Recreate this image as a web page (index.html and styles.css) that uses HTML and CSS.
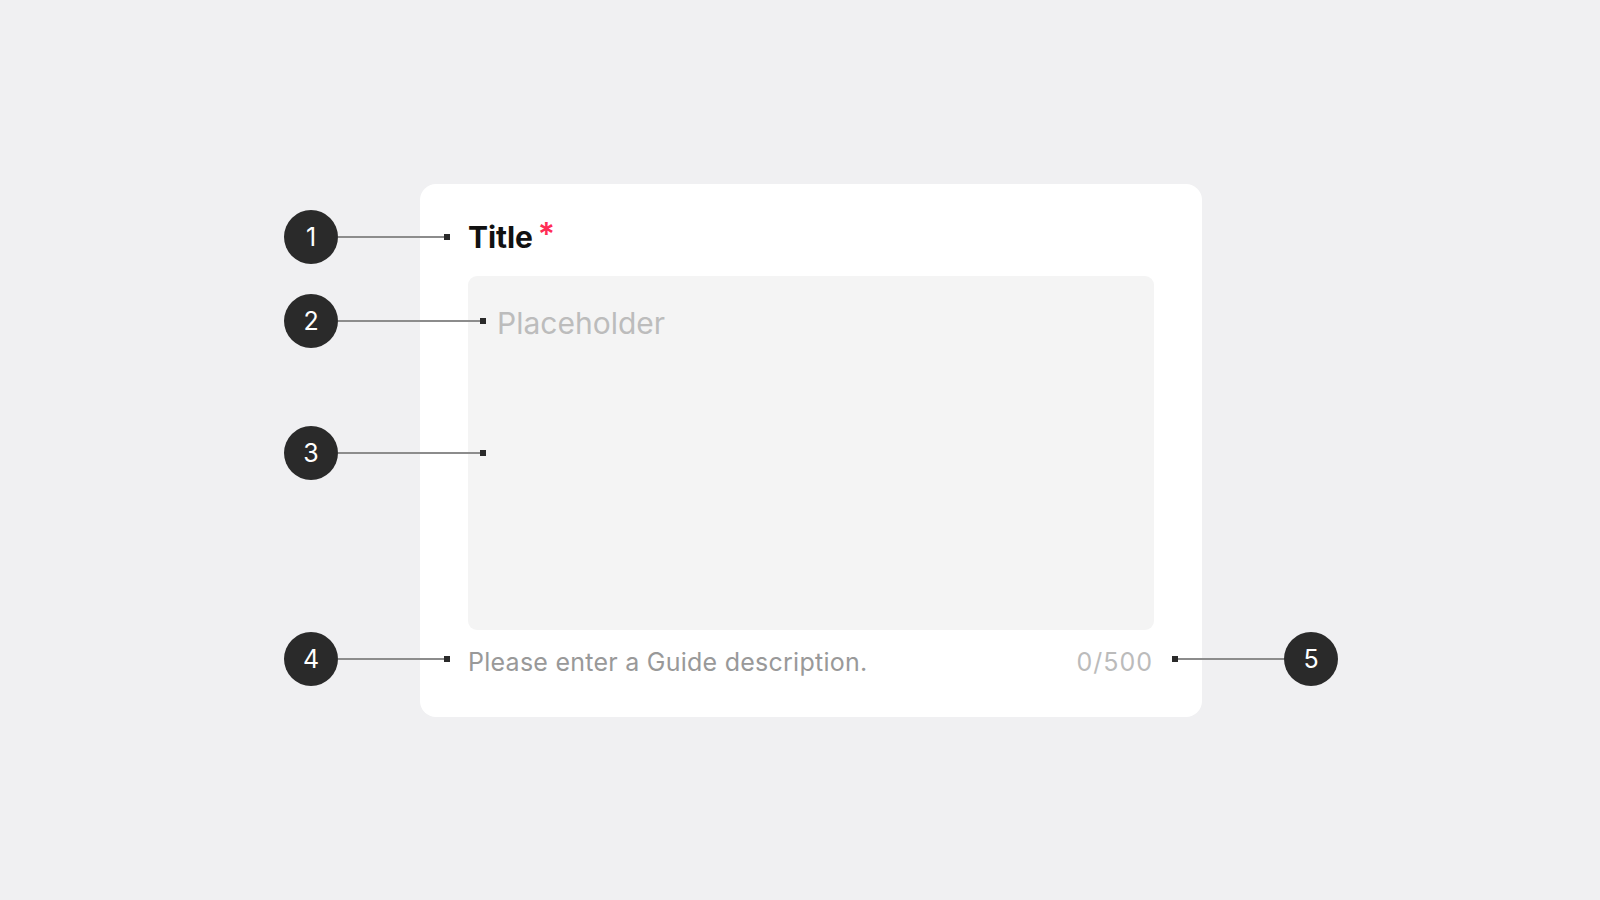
FILE: index.html
```html
<!DOCTYPE html>
<html lang="en">
<head>
<meta charset="utf-8">
<title>Textarea anatomy</title>
<link rel="stylesheet" href="styles.css">
</head>
<body>
<main class="stage">
  <section class="card">
    <div class="label-row">
      <span class="label">Title</span><span class="required">*</span>
    </div>
    <div class="field">
      <span class="placeholder">Placeholder</span>
    </div>
    <div class="footer">
      <span class="helper">Please enter a Guide description.</span>
      <span class="counter">0/500</span>
    </div>

    <div class="callout callout-1"><span class="dot">1</span><span class="line"></span><span class="tip"></span></div>
    <div class="callout callout-2"><span class="dot">2</span><span class="line"></span><span class="tip"></span></div>
    <div class="callout callout-3"><span class="dot">3</span><span class="line"></span><span class="tip"></span></div>
    <div class="callout callout-4"><span class="dot">4</span><span class="line"></span><span class="tip"></span></div>
    <div class="callout callout-5 reverse"><span class="dot">5</span><span class="line"></span><span class="tip"></span></div>
  </section>
</main>
</body>
</html>
```

FILE: styles.css
```css
* { box-sizing: border-box; }

html, body {
  margin: 0;
  padding: 0;
  background: #f0f0f2;
  font-family: Inter, "Noto Sans", "Liberation Sans", sans-serif;
}

.stage {
  width: 1600px;
  height: 900px;
  padding: 184px 0 0 420px;
}

.card {
  position: relative;
  width: 782px;
  height: 533px;
  background: #ffffff;
  border-radius: 16px;
  padding: 0 48px;
  display: flex;
  flex-direction: column;
}

.label-row {
  height: 92px;
  display: flex;
  align-items: flex-start;
  padding-top: 33px;
}

.label {
  font-size: 30px;
  font-weight: 700;
  line-height: 40px;
  color: #111111;
  letter-spacing: -0.1px;
}

.required {
  color: #ff2d55;
  font-size: 32px;
  font-weight: 600;
  line-height: 32px;
  margin-left: 5px;
  margin-top: 2px;
}

.field {
  height: 354px;
  background: #f4f4f4;
  border-radius: 9px;
  padding: 29px 29px;
}

.placeholder {
  display: block;
  font-size: 30px;
  line-height: 36px;
  color: #bcbcbc;
}

.footer {
  display: flex;
  justify-content: space-between;
  align-items: baseline;
  padding-top: 12px;
}

.helper {
  font-size: 25px;
  line-height: 40px;
  color: #999999;
  letter-spacing: 0.25px;
}

.counter {
  font-size: 25px;
  line-height: 40px;
  color: #bbbbbb;
  letter-spacing: 1px;
  margin-right: 1px;
}

/* annotation callouts */
.callout {
  position: absolute;
  height: 54px;
  display: flex;
  align-items: center;
}

.callout.reverse { flex-direction: row-reverse; }

.dot {
  flex: 0 0 54px;
  width: 54px;
  height: 54px;
  border-radius: 50%;
  background: #2a2a2a;
  color: #ffffff;
  font-size: 25px;
  line-height: 54px;
  text-align: center;
}

.line {
  flex: 1 1 auto;
  height: 2px;
  background: #8c8c8c;
}

.tip {
  flex: 0 0 6px;
  width: 6px;
  height: 6px;
  background: #2a2a2a;
}

.callout-1 { left: -136px; top: 26px; width: 166px; }
.callout-2 { left: -136px; top: 110px; width: 202px; }
.callout-3 { left: -136px; top: 242px; width: 202px; }
.callout-4 { left: -136px; top: 448px; width: 166px; }
.callout-5 { left: 752px; top: 448px; width: 166px; }
```
